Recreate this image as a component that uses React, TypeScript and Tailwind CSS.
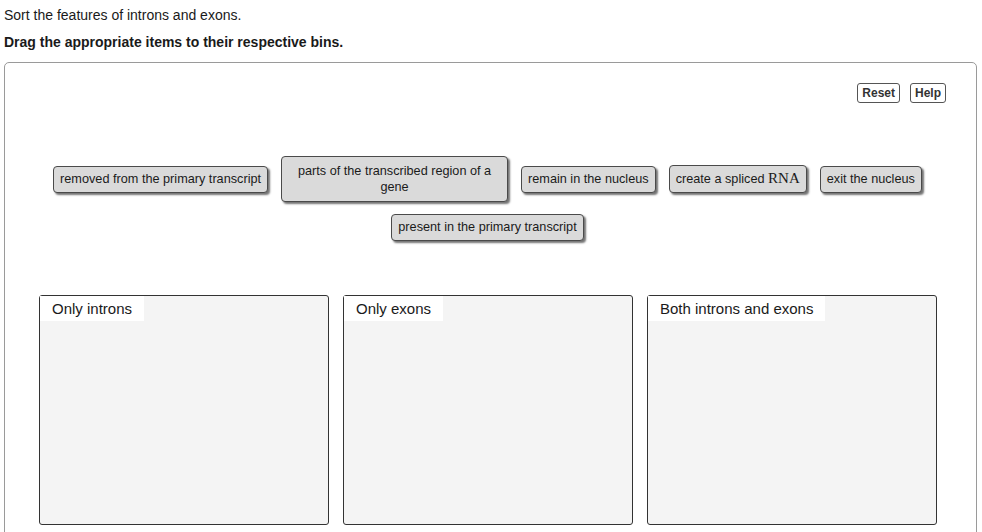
import React from "react";

function Item({ children, className = "" }: { children: React.ReactNode; className?: string }) {
  return (
    <div
      className={
        "bg-[#dadada] border border-[#4a4a4a] rounded-[4px] shadow-[2px_2px_2px_rgba(0,0,0,0.55)] text-[12.7px] leading-[15px] text-[#1a1a1a] px-[6px] py-[5px] text-center " +
        className
      }
    >
      {children}
    </div>
  );
}

function Bin({ label }: { label: string }) {
  return (
    <div className="w-[290px] h-[230px] bg-[#f4f4f4] border border-[#333] rounded-[3px] flex flex-col items-start">
      <div className="bg-white h-[25px] px-[12px] text-[15px] leading-[25px] text-[#1a1a1a]">{label}</div>
    </div>
  );
}

export default function App() {
  return (
    <div className="w-[982px] h-[532px] overflow-hidden bg-white text-[#1a1a1a]" style={{ fontFamily: '"Liberation Sans", Arial, sans-serif' }}>
      <div className="pl-[4px] pt-[7px] text-[14px] leading-[17px]">Sort the features of introns and exons.</div>
      <div className="pl-[4px] pt-[10px] text-[14px] leading-[17px] font-bold">Drag the appropriate items to their respective bins.</div>
      <div className="ml-[4px] mt-[11px] w-[973px] h-[480px] border border-[#9a9a9a] rounded-[5px] pt-[20px]">
        <div className="flex justify-end gap-[10px] pr-[30px]">
          <button className="h-[20px] px-[4px] border border-[#555] rounded-[3px] bg-white text-[12px] font-bold leading-[18px] text-[#333]">Reset</button>
          <button className="h-[20px] px-[4px] border border-[#555] rounded-[3px] bg-white text-[12px] font-bold leading-[18px] text-[#333]">Help</button>
        </div>
        <div className="mt-[53px] flex flex-col items-center gap-[12px] pr-[6px]">
          <div className="flex items-center gap-[13px]">
            <Item>removed from the primary transcript</Item>
            <Item className="w-[227px] py-[6px] leading-[16px]">parts of the transcribed region of a gene</Item>
            <Item>remain in the nucleus</Item>
            <Item>
              create a spliced{" "}
              <span className="text-[15px]" style={{ fontFamily: '"Liberation Serif", "Times New Roman", serif' }}>RNA</span>
            </Item>
            <Item>exit the nucleus</Item>
          </div>
          <div className="flex">
            <Item>present in the primary transcript</Item>
          </div>
        </div>
        <div className="mt-[54px] pl-[34px] flex gap-[14px]">
          <Bin label="Only introns" />
          <Bin label="Only exons" />
          <Bin label="Both introns and exons" />
        </div>
      </div>
    </div>
  );
}
